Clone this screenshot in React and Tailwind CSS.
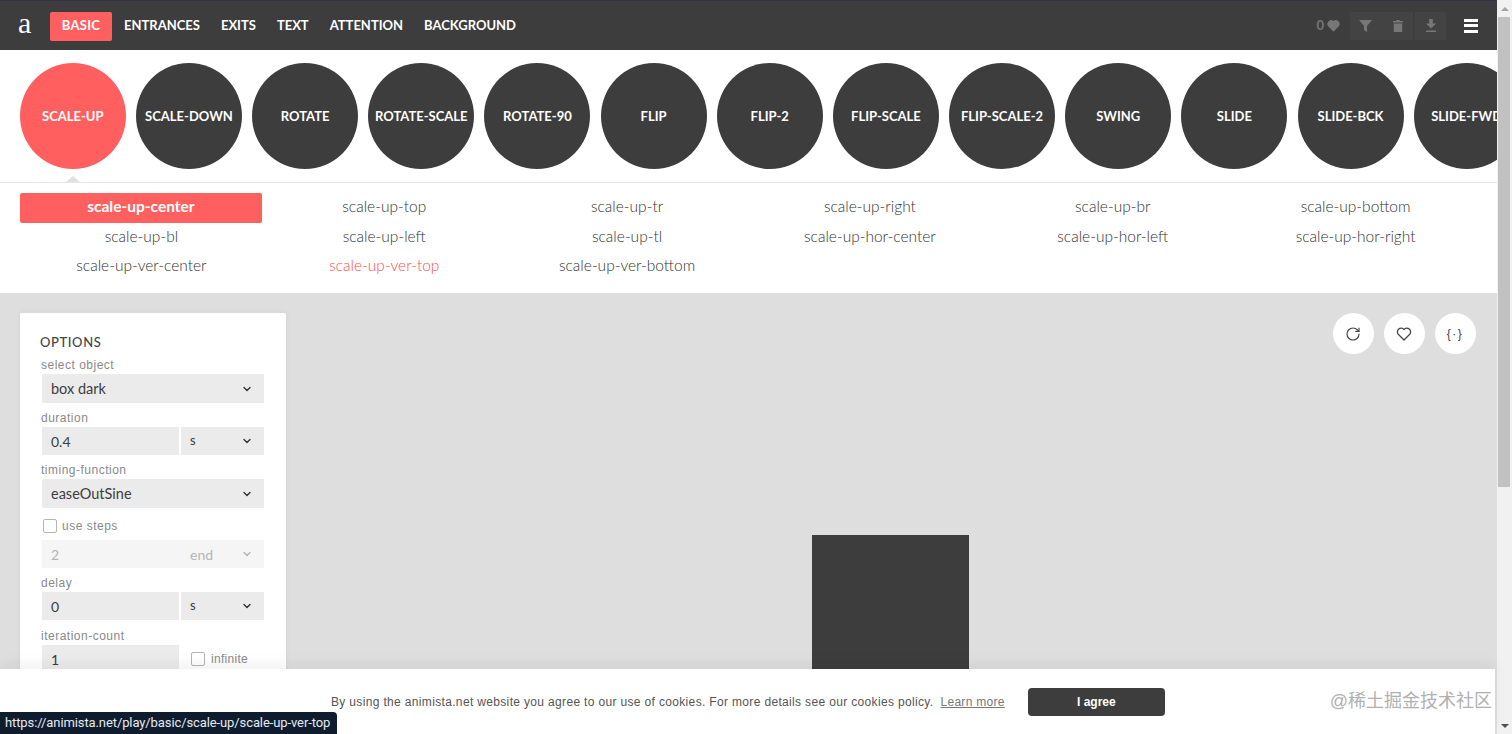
import React from "react";
import { ChevronDown, RotateCw } from "lucide-react";

const circles = ["SCALE-UP","SCALE-DOWN","ROTATE","ROTATE-SCALE","ROTATE-90","FLIP","FLIP-2","FLIP-SCALE","FLIP-SCALE-2","SWING","SLIDE","SLIDE-BCK","SLIDE-FWD"];
const subs = ["scale-up-center","scale-up-top","scale-up-tr","scale-up-right","scale-up-br","scale-up-bottom","scale-up-bl","scale-up-left","scale-up-tl","scale-up-hor-center","scale-up-hor-left","scale-up-hor-right","scale-up-ver-center","scale-up-ver-top","scale-up-ver-bottom"];
const tabs = ["ENTRANCES","EXITS","TEXT","ATTENTION","BACKGROUND"];

function Label({ children }) {
  return <div className="ml-[1px] h-[20px] pt-[3px] text-[12px] leading-[16px] tracking-[0.5px] text-[#8a8a8a] font-['Liberation_Sans',sans-serif]">{children}</div>;
}
function Select({ value }) {
  return (
    <div className="ml-[2px] flex h-[29px] w-[222px] items-center justify-between rounded-l-[2px] bg-[#ebebeb] pl-[9px] pr-[11px] text-[14.5px] text-[#3d3d3d]">
      <span>{value}</span>
      <ChevronDown size={12} strokeWidth={2.75} className="text-[#333]" />
    </div>
  );
}
function Split({ value, unit, disabled }) {
  const text = disabled ? "text-[#b5b5b5]" : "text-[#3d3d3d]";
  const bg = disabled ? "bg-[#f5f5f5]" : "bg-[#ebebeb]";
  return (
    <div className={`ml-[2px] flex h-[28px] w-[222px] text-[14px] ${disabled ? "bg-[#f5f5f5]" : ""} ${text}`}>
      <div className={`flex w-[137px] items-center pl-[9px] ${bg}`}>{value}</div>
      <div className={`ml-[2px] flex flex-1 items-center justify-between pl-[9px] pr-[11px] ${bg}`}>
        <span className={unit === "s" ? "text-[13px]" : ""}>{unit}</span>
        <ChevronDown size={12} strokeWidth={2.75} className={disabled ? "text-[#b5b5b5]" : "text-[#333]"} />
      </div>
    </div>
  );
}
function Check() {
  return <span className="block h-[14px] w-[14px] rounded-[2px] border border-[#b4b4b4] bg-white" />;
}

export default function App() {
  return (
    <div className="relative flex h-[734px] w-full overflow-hidden bg-white font-['Lato',sans-serif]">
      <div className="flex min-w-0 flex-1 flex-col">
        <header className="flex h-[50px] shrink-0 items-center border-t border-t-[#33334a] bg-[#3d3d3d] pr-[19px] text-white">
          <span className="ml-[18px] w-[32px] pb-[5px] font-['Liberation_Serif',serif] text-[30px] leading-none">a</span>
          <nav className="flex items-center pt-[1px] text-[13px] font-bold">
            <span className="flex h-[29px] w-[62px] items-center justify-center rounded-[2px] bg-[#ff5f5f] tracking-[0.3px]">BASIC</span>
            <div className="ml-[12px] flex gap-[21px]">
              {tabs.map((t) => <span key={t}>{t}</span>)}
            </div>
          </nav>
          <div className="ml-auto flex items-center">
            <span className="text-[13px] font-bold text-[#777]">0</span>
            <svg width="15" height="13" viewBox="0 0 24 22" className="ml-[2px]" fill="#777"><path d="M12 21.5 2.6 12A6.6 6.6 0 0 1 12 3.2 6.6 6.6 0 0 1 21.4 12Z" /></svg>
            <div className="ml-[9px] flex h-[28px] w-[63px] items-center bg-[#434343] pl-[9px]">
              <svg width="13" height="12" viewBox="0 0 13 12" fill="#777"><path d="M0 0h13L8 6v6L5 10V6Z" /></svg>
              <svg width="10" height="12" viewBox="0 0 10 12" fill="#777" className="ml-[21px]"><path d="M3.5 0h3l.5 1h3v1.4H0V1h3ZM.8 3.4h8.4V12H.8Z" /></svg>
            </div>
            <div className="ml-[2px] flex h-[28px] w-[31px] items-center justify-center bg-[#434343]">
              <svg width="12" height="13" viewBox="0 0 12 13" fill="#777"><path d="M4.2 0h3.6v4.5H11L6 9.5 1 4.5h3.2ZM1 11.5h10V13H1Z" /></svg>
            </div>
            <div className="ml-[18px] flex w-[14px] flex-col gap-[2.5px]">
              <span className="h-[3px] bg-white" /><span className="h-[3px] bg-white" /><span className="h-[3px] bg-white" />
            </div>
          </div>
        </header>

        <div className="relative h-[133px] shrink-0 overflow-hidden border-b border-[#e6e6e6] pl-[19.8px] pt-[13px]">
          <div className="flex gap-[10.17px]">
            {circles.map((c, i) => (
              <div key={c} className={`flex h-[106px] w-[106px] shrink-0 items-center justify-center whitespace-nowrap rounded-full pt-[2px] text-[13px] font-bold text-white ${i === 0 ? "bg-[#ff5f5f]" : "bg-[#3d3d3d]"}`}>{c}</div>
            ))}
          </div>
          <div className="absolute bottom-0 left-[66px] h-0 w-0 border-x-[7px] border-b-[6px] border-x-transparent border-b-[#e0e0e0]" />
        </div>

        <div className="grid h-[110px] shrink-0 grid-cols-6 content-start px-[20px] pt-[10px] text-[15.5px] font-light text-[#333]">
          {subs.map((s, i) => (
            <div key={s} className={`flex h-[29.5px] items-center justify-center pb-[1.5px] ${i === 0 ? "mr-[1px] rounded-[2px] bg-[#ff5f5f] font-bold text-white" : ""} ${s === "scale-up-ver-top" ? "text-[#ff4d4d]" : ""}`}>{s}</div>
          ))}
        </div>

        <main className="relative flex min-h-0 flex-1 bg-[#dedede] pl-[20px] pt-[20px]">
          <aside className="h-[420px] w-[266px] shrink-0 rounded-[2px] bg-white pl-[20px] pt-[20px] shadow-[0_0_6px_rgba(0,0,0,0.05)]">
            <h2 className="h-[21px] text-[13px] font-medium leading-[18px] tracking-[0.6px] text-[#444]">OPTIONS</h2>
            <Label>select object</Label>
            <Select value="box dark" />
            <div className="h-[4px]" />
            <Label>duration</Label>
            <Split value="0.4" unit="s" />
            <div className="h-[4px]" />
            <Label>timing-function</Label>
            <Select value="easeOutSine" />
            <div className="ml-[3px] mt-[10px] flex h-[16px] items-center gap-[5px] font-['Liberation_Sans',sans-serif] text-[12px] tracking-[0.5px] text-[#8a8a8a]"><Check /><span>use steps</span></div>
            <div className="h-[6px]" />
            <Split value="2" unit="end" disabled />
            <div className="h-[4px]" />
            <Label>delay</Label>
            <Split value="0" unit="s" />
            <div className="h-[5px]" />
            <Label>iteration-count</Label>
            <div className="ml-[2px] flex h-[28px] w-[222px] items-center text-[14px]">
              <div className="flex h-full w-[137px] items-center bg-[#ebebeb] pl-[9px] text-[#3d3d3d]">1</div>
              <div className="ml-[12px] flex items-center gap-[6px] font-['Liberation_Sans',sans-serif] text-[12px] tracking-[0.3px] text-[#8a8a8a]"><Check /><span>infinite</span></div>
            </div>
          </aside>
          <div className="flex flex-1 justify-center pr-[2px] pt-[222px]">
            <div className="h-[200px] w-[157px] bg-[#3d3d3d]" />
          </div>
          <div className="absolute right-[21.5px] top-[20px] flex gap-[10px]">
            <div className="flex h-[41px] w-[41px] items-center justify-center rounded-full bg-white text-[#444]"><RotateCw size={16} strokeWidth={1.75} /></div>
            <div className="flex h-[41px] w-[41px] items-center justify-center rounded-full bg-white text-[#444]">
              <svg width="16" height="14" viewBox="0 0 24 22" fill="none" stroke="currentColor" strokeWidth="2"><path d="M12 20.5 3 11.5A5.8 5.8 0 0 1 12 4 5.8 5.8 0 0 1 21 11.5Z" strokeLinejoin="round" /></svg>
            </div>
            <div className="flex h-[41px] w-[41px] items-center justify-center rounded-full bg-white font-['Liberation_Sans',sans-serif] text-[12px] tracking-[1.5px] text-[#444]">{"{·}"}</div>
          </div>
        </main>
      </div>

      <div className="relative flex w-[15px] shrink-0 flex-col bg-[#f1f1f1]">
        <div className="flex h-[17px] items-center justify-center">
          <span className="h-0 w-0 border-x-[4px] border-b-[4px] border-x-transparent border-b-[#a3a3a3]" />
        </div>
        <div className="ml-[1px] mr-[2px] h-[470px] bg-[#c1c1c1]" />
        <div className="mt-auto flex h-[17px] items-center justify-center">
          <span className="h-0 w-0 border-x-[4px] border-t-[4px] border-x-transparent border-t-[#505050]" />
        </div>
      </div>

      <div className="absolute bottom-0 left-0 right-[17px] flex h-[65px] items-center bg-white pl-[331px] font-['Liberation_Sans',sans-serif] shadow-[0_-6px_12px_rgba(0,0,0,0.05)]">
        <span className="text-[12px] tracking-[0.34px] text-[#555]">By using the animista.net website you agree to our use of cookies. For more details see our cookies policy.</span>
        <span className="ml-[7px] text-[12px] tracking-[0.3px] text-[#777] underline">Learn more</span>
        <span className="ml-[23px] flex h-[28px] w-[137px] items-center justify-center rounded-[4px] bg-[#3d3d3d] text-[12px] font-bold text-white">I agree</span>
        <span className="ml-[165px] whitespace-nowrap font-['Liberation_Sans','Noto_Sans_CJK_SC',sans-serif] text-[18px] text-[#b0b0b0]">@稀土掘金技术社区</span>
      </div>
      <div className="absolute bottom-0 left-0 flex h-[22px] w-[337px] items-center whitespace-nowrap rounded-tr-[4px] bg-[#0f1c2e] pl-[5px] font-['Roboto',sans-serif] text-[13px] tracking-[-0.1px] text-[#e4ebf2]">https://animista.net/play/basic/scale-up/scale-up-ver-top</div>
    </div>
  );
}
